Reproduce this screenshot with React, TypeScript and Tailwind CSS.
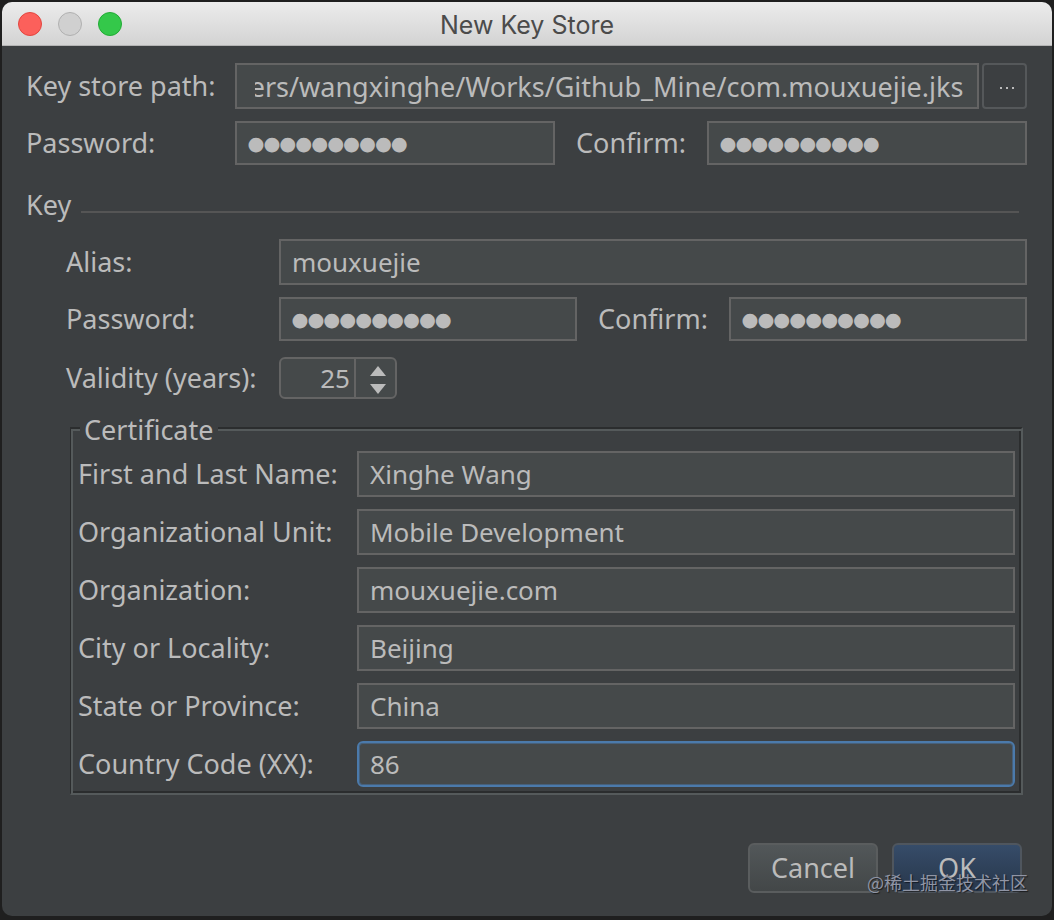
import { useEffect, useRef, useState } from 'react'
import type { ComponentProps } from 'react'

interface CertificateField {
  id: string
  label: string
  value: string
}

const certificateFields: CertificateField[] = [
  { id: 'name', label: 'First and Last Name:', value: 'Xinghe Wang' },
  { id: 'unit', label: 'Organizational Unit:', value: 'Mobile Development' },
  { id: 'organization', label: 'Organization:', value: 'mouxuejie.com' },
  { id: 'city', label: 'City or Locality:', value: 'Beijing' },
  { id: 'state', label: 'State or Province:', value: 'China' },
  { id: 'country', label: 'Country Code (XX):', value: '86' }
]

const fieldClass = 'min-w-0 flex-1 border-2 border-[#646464] bg-[#45494a] pr-3.5 text-[#bbbbbb] outline-none'

const TextField = ({ className = '', ...props }: ComponentProps<'input'>) => (
  <input type="text" spellCheck={false} className={`${fieldClass} h-[46px] pl-[11px] text-[26px] ${className}`} {...props} />
)

const PasswordField = (props: ComponentProps<'input'>) => (
  <input
    type="password"
    className={`${fieldClass} h-11 pt-1 pl-[11px] font-['DejaVu_Sans',sans-serif] text-[27px] [-webkit-text-stroke:7px_#bbbbbb]`}
    {...props}
  />
)

const PathField = ({ id, defaultValue }: { id: string; defaultValue: string }) => {
  const ref = useRef<HTMLInputElement>(null)

  // keep the file name in view when the path is longer than the field
  useEffect(() => {
    if (ref.current) ref.current.scrollLeft = ref.current.scrollWidth
  }, [])

  return (
    <input
      ref={ref}
      id={id}
      type="text"
      spellCheck={false}
      defaultValue={defaultValue}
      className={`${fieldClass} h-[46px] pl-[18px]`}
    />
  )
}

const YearSpinner = ({ id }: { id: string }) => {
  const [years, setYears] = useState(25)

  return (
    <div className="flex h-[42px] w-[118px] overflow-hidden rounded-md border-2 border-[#646464] bg-[#45494a]">
      <input
        id={id}
        type="number"
        value={years}
        onChange={(e) => setYears(Number(e.target.value))}
        className="w-[75px] border-r-2 border-[#646464] pr-1 text-right text-[26px] outline-none [appearance:textfield]
                 [&::-webkit-inner-spin-button]:appearance-none"
      />
      <div className="flex flex-1 flex-col items-center justify-center gap-2 pt-1 pl-1">
        <button type="button" aria-label="Increase years" onClick={() => setYears(years + 1)}>
          <svg width="16" height="10" viewBox="0 0 16 10" className="block fill-[#bbbbbb]">
            <path d="M8 0L16 10H0Z" />
          </svg>
        </button>
        <button type="button" aria-label="Decrease years" onClick={() => setYears(years - 1)}>
          <svg width="16" height="10" viewBox="0 0 16 10" className="block fill-[#bbbbbb]">
            <path d="M0 0H16L8 10Z" />
          </svg>
        </button>
      </div>
    </div>
  )
}

const TitleBar = () => (
  <header
    className="relative flex h-11 items-center justify-center border-b border-[#b4b4b4]
             bg-linear-to-b from-[#ececec] to-[#d3d3d3]"
  >
    <div className="absolute left-4 flex gap-4">
      <button type="button" aria-label="Close" className="size-6 rounded-full border border-[#e2463f] bg-[#fc605b]" />
      <button type="button" aria-label="Minimize" className="size-6 rounded-full border border-[#b0b0b0] bg-[#d0d0d0]" />
      <button type="button" aria-label="Zoom" className="size-6 rounded-full border border-[#22ab35] bg-[#34c84a]" />
    </div>
    <h1 className="pt-[2px] font-[Inter,sans-serif] text-[25px] text-[#4b4b4b]">New Key Store</h1>
  </header>
)

const App = () => (
  <div className="relative min-h-screen bg-[#1f1f1f] px-[2px] pt-[2px] pb-1 font-['Noto_Sans',sans-serif] text-[27px] leading-7 text-[#bbbbbb]">
    <main className="overflow-hidden rounded-[10px] bg-[#3c3f41]">
      <TitleBar />

      <form className="pt-[17px] pr-[25px] pb-[23px] pl-6" onSubmit={(e) => e.preventDefault()}>
        <div className="flex items-center">
          <label htmlFor="path" className="w-[209px]">Key store path:</label>
          <PathField id="path" defaultValue="/Users/wangxinghe/Works/Github_Mine/com.mouxuejie.jks" />
          <button
            type="button"
            aria-label="Browse"
            className="ml-[3px] flex h-[46px] w-[45px] items-center justify-center rounded-sm border-2 border-[#55585a]"
          >
            <svg width="16" height="2" viewBox="0 0 16 2" className="mt-1 ml-1 fill-[#bbbbbb]">
              <path d="M1 0h2v2h-2zM7 0h2v2h-2zM13 0h2v2h-2z" />
            </svg>
          </button>
        </div>

        <div className="mt-3 flex items-center">
          <label htmlFor="store-password" className="w-[209px]">Password:</label>
          <PasswordField id="store-password" defaultValue="mouxuejie1" />
          <label htmlFor="store-confirm" className="w-[152px] pl-[21px]">Confirm:</label>
          <PasswordField id="store-confirm" defaultValue="mouxuejie1" />
        </div>

        <section>
          <div className="mt-[26px] mb-5 flex gap-2.5">
            <h2>Key</h2>
            <div className="mt-5 mr-2 h-[2px] flex-1 bg-[#555555]" />
          </div>

          <div className="pl-10">
            <div className="flex items-center">
              <label htmlFor="alias" className="w-[213px]">Alias:</label>
              <TextField id="alias" defaultValue="mouxuejie" />
            </div>
            <div className="mt-3 flex items-center">
              <label htmlFor="key-password" className="w-[213px]">Password:</label>
              <PasswordField id="key-password" defaultValue="mouxuejie1" />
              <label htmlFor="key-confirm" className="w-[152px] pl-[21px]">Confirm:</label>
              <PasswordField id="key-confirm" defaultValue="mouxuejie1" />
            </div>
            <div className="mt-4 flex items-center">
              <label htmlFor="validity" className="w-[213px]">Validity (years):</label>
              <YearSpinner id="validity" />
            </div>

            <fieldset
              className="mx-1 mt-[13px] border-t-2 border-r-2 border-b-2 border-l border-t-[#2b2d2e] border-r-[#555a5b]
                       border-b-[#555a5b] border-l-[#2b2d2e] pr-[6px] pb-[6px] pl-[7px]
                       shadow-[inset_2px_2px_#555a5b,inset_-2px_-2px_#2b2d2e]"
            >
              <legend className="ml-[2px] bg-[#3c3f41] px-1 pt-1">Certificate</legend>
              <div className="flex flex-col gap-3 pt-[7px]">
                {certificateFields.map((field) => (
                  <div key={field.id} className="flex items-center">
                    <label htmlFor={field.id} className="w-[279px]">{field.label}</label>
                    <TextField
                      id={field.id}
                      defaultValue={field.value}
                      className={
                        field.id === 'country'
                          ? 'rounded-md border-[#4b7aab]! shadow-[inset_0_0_0_1px_#47607a]'
                          : ''
                      }
                    />
                  </div>
                ))}
              </div>
            </fieldset>
          </div>
        </section>

        <div className="mt-12 mr-[5px] flex justify-end gap-3.5">
          <button
            type="button"
            className="h-[50px] w-[130px] rounded-md border-2 border-[#5a5d5e] bg-linear-to-b from-[#525759] to-[#434748]"
          >
            Cancel
          </button>
          <button
            type="submit"
            className="h-[50px] w-[130px] rounded-md border-2 border-[#4f565e] bg-linear-to-b from-[#364c69] to-[#28374b]"
          >
            OK
          </button>
        </div>
      </form>
    </main>

    <p
      className="absolute right-[26px] bottom-[26px] font-['Noto_Sans_CJK_SC',sans-serif] text-lg leading-6
               text-[#9095a5] [text-shadow:1px_1px_1px_#00000099]"
    >
      @稀土掘金技术社区
    </p>
  </div>
)

export default App
